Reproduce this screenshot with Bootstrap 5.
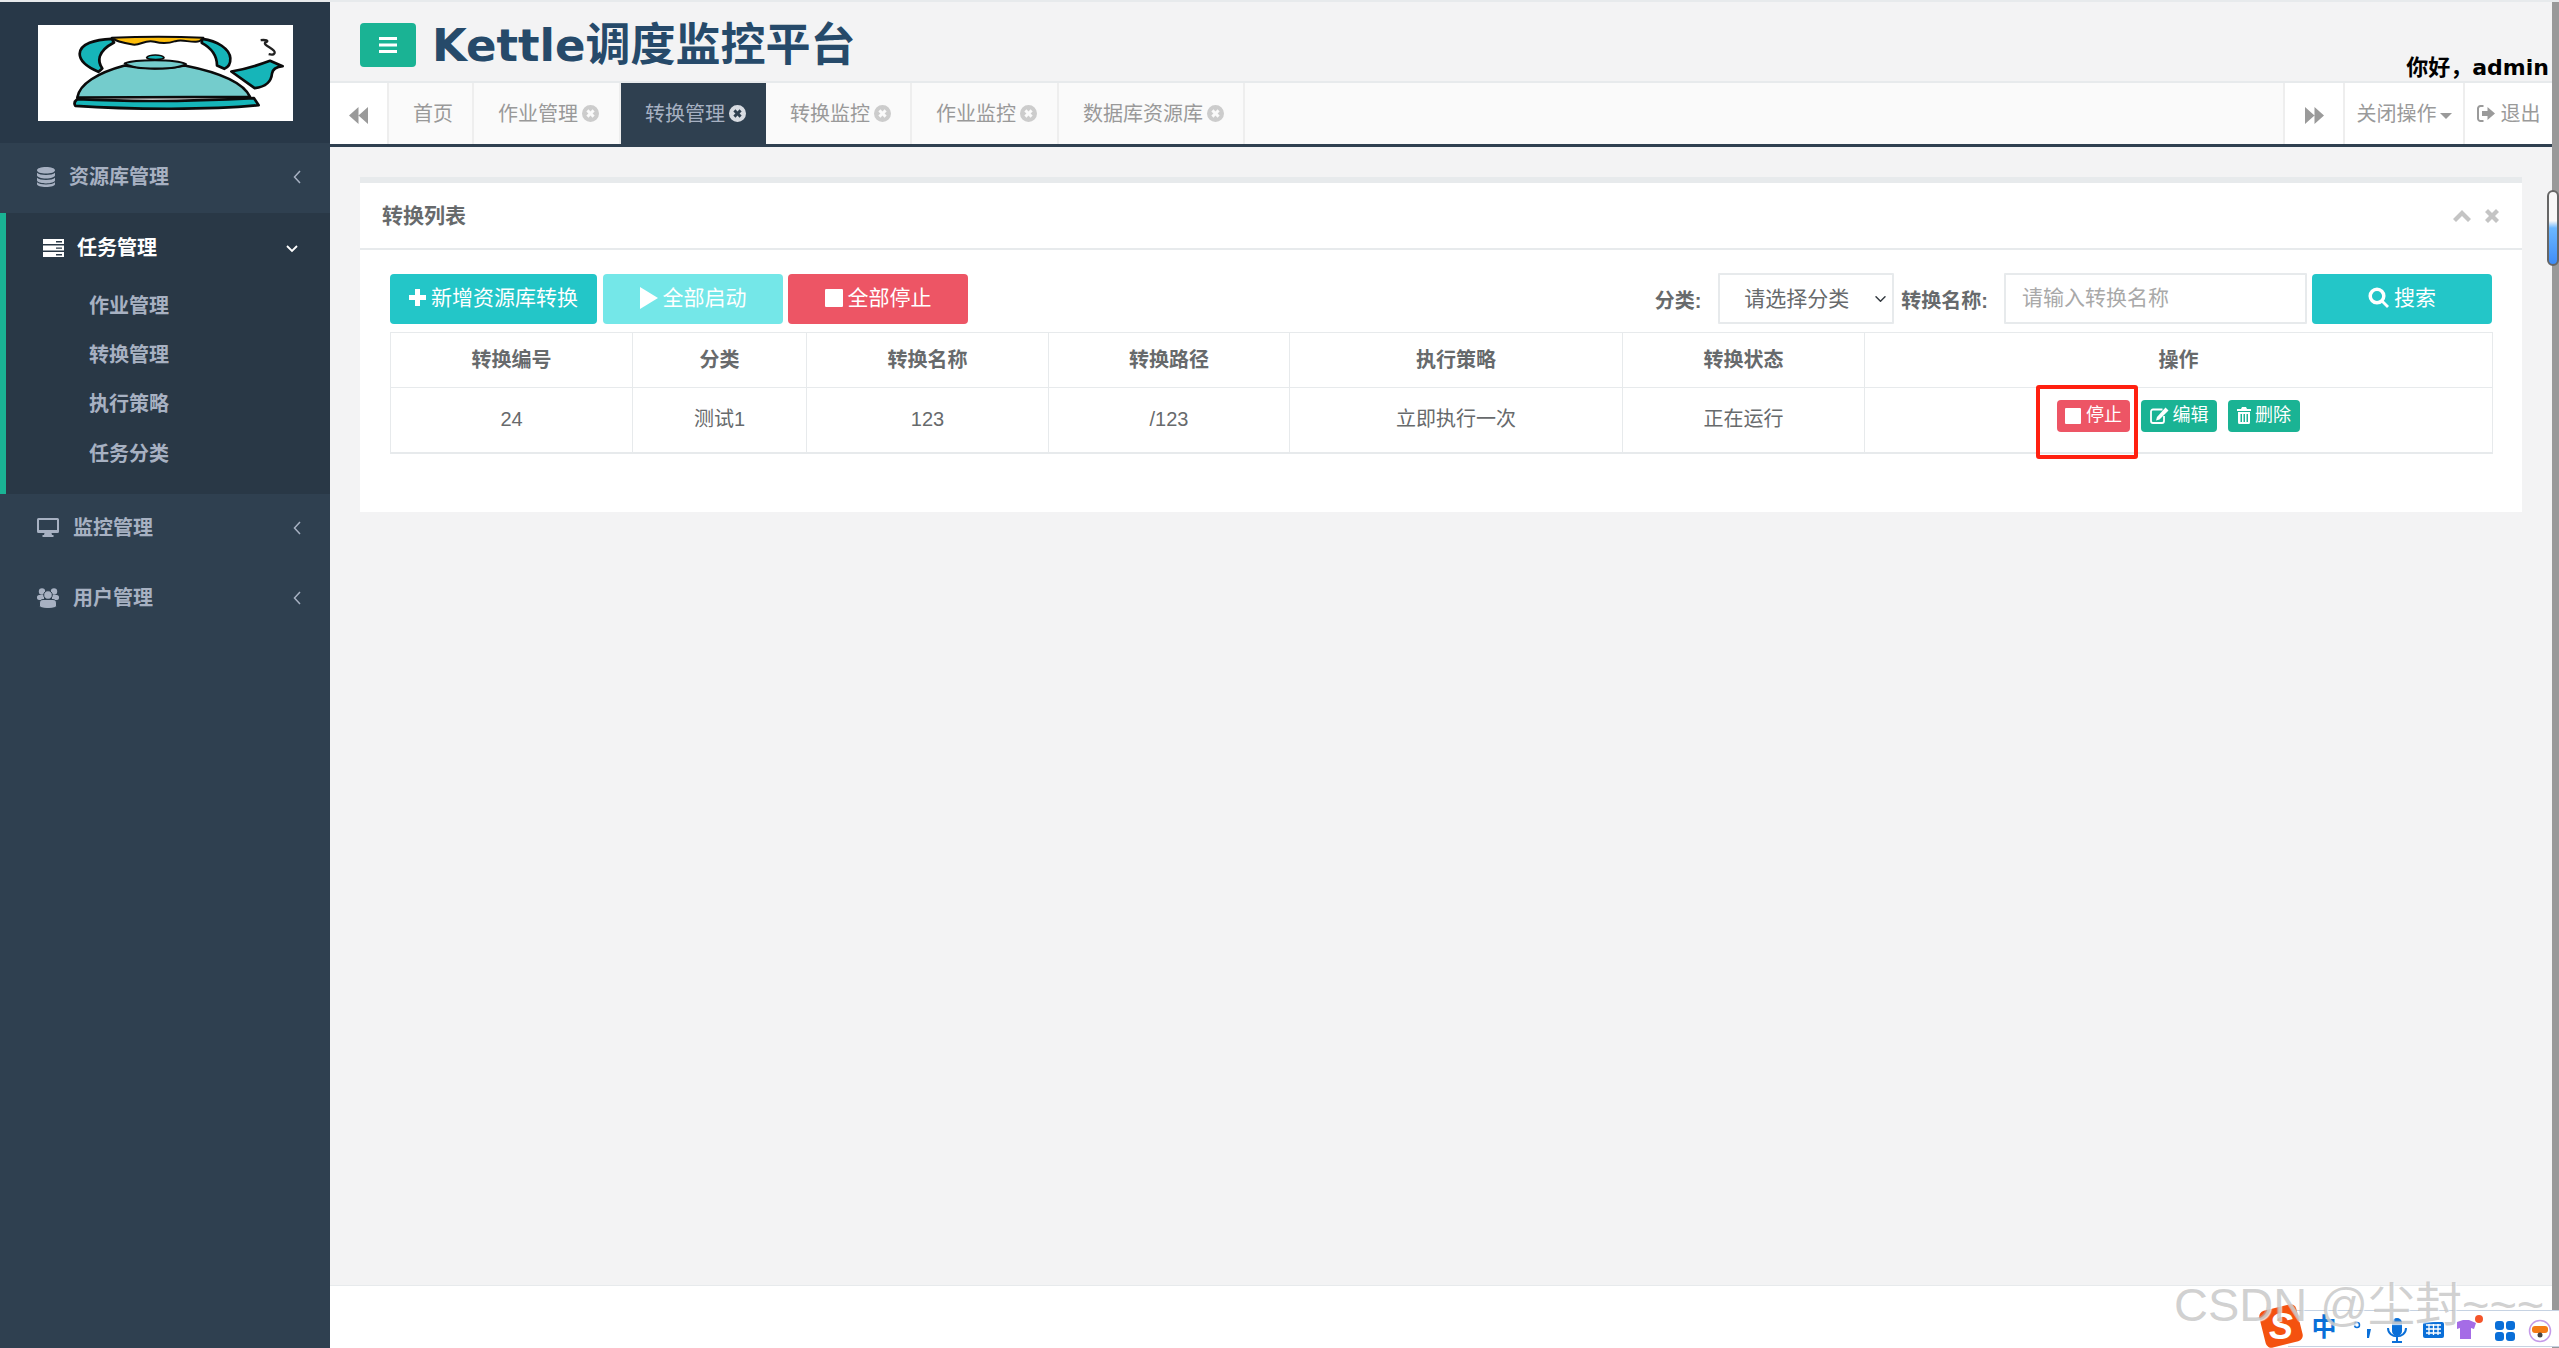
<!DOCTYPE html>
<html lang="zh-CN">
<head>
  <meta charset="UTF-8" />
  <title>Kettle调度监控平台</title>
  <link href="https://cdn.jsdelivr.net/npm/bootstrap@5.3.0/dist/css/bootstrap.min.css" rel="stylesheet" />
  <style>
    body { font-family: "Liberation Sans", "Noto Sans CJK SC", sans-serif; font-size: 20px; color: #676a6c; background: #e7eaec; padding-top: 2px; }
    svg { display: block; flex: none; fill: currentColor; }
    .page-shell { height: 1346px; position: relative; }

    /* sidebar */
    .side-panel { width: 330px; flex: none; background: #2f4050; color: #a7b1c2; font-weight: 700; }
    .side-logo { height: 141px; background: #283848; padding: 23px 0 0 38px; }
    .logo-box { width: 255px; height: 96px; background: #fff; }
    .side-item { height: 70px; padding: 0 29px 2px 37px; gap: 14px; }
    .side-item .side-label { flex-grow: 1; line-height: 1; }
    .side-open { background: #293846; border-left: 6px solid #1ab394; padding-bottom: 16px; }
    .side-open .side-item { height: 68px; color: #fff; padding: 2px 31px 0 37px; gap: 13px; }
    .side-sub { height: 49.2px; padding-left: 83px; line-height: 51px; }

    /* top */
    .main-col { min-width: 0; background: #f3f3f4; }
    .top-bar { height: 81px; border-bottom: 2px solid #e7eaec; padding-left: 30px; background: #f3f3f4; }
    .menu-toggle { width: 56px; height: 44px; margin-top: 21px; background: #1ab394; border-radius: 4px; padding: 0; border: 0; color: #fff; }
    .site-title { margin: 16px 0 0 16px; font-family: "DejaVu Sans", "Noto Sans CJK SC", sans-serif; font-weight: 700; font-size: 45px; line-height: 56px; color: #264a6a; }
    .hello-user { margin-top: 49px; padding-right: 3px; font-family: "DejaVu Sans", "Noto Sans CJK SC", sans-serif; font-weight: 700; font-size: 22px; line-height: 34px; color: #000; white-space: nowrap; }

    .tab-strip { height: 64px; background: #fafafa; border-bottom: 3px solid #2f4050; color: #999; }
    .tab-cell { height: 61px; border-right: 2px solid #eee; padding: 0 0 0 24px; gap: 4px; white-space: nowrap; }
    .tab-arrow { background: #fff; padding: 0; justify-content: center; color: #9a9a9a; }
    .tab-on { background: #2f4050; color: #a7b1c2; border-right: 0; }
    .tab-dot { color: #ccc; }
    .tab-on .tab-dot { color: #d8dce2; }
    .tab-side { background: #fff; border-left: 2px solid #eee; border-right: 0; }

    /* list card */
    .list-area { padding: 30px 30px 0 30px; }
    .list-card { background: #fff; border-top: 6px solid #e7eaec; height: 335px; }
    .list-head { height: 67px; border-bottom: 2px solid #e7eaec; padding: 0 23px 0 22px; font-size: 21px; font-weight: 700; }
    .head-tools { color: #c4c4c4; gap: 14px; }
    .list-body { padding: 23px 30px 0 30px; }

    .act-btn { height: 50px; border: 0; border-radius: 4px; color: #fff; font-size: 21px; padding: 0 0 2px; gap: 5px; }
    .act-info { background: #23c6c8; }
    .act-faded { background: #74e7e8; }
    .act-red { background: #ed5565; }
    .filter-label { font-size: 20px; font-weight: 700; white-space: nowrap; margin-top: 4px; }
    .filter-select.form-select { width: 176px; height: 51px; font-size: 21px; color: #676a6c; border: 2px solid #e7eaec; border-radius: 1px; padding: 0 30px 0 24px; background-size: 15px 12px; background-position: right 4px center; }
    .filter-input.form-control { width: 303px; height: 51px; font-size: 21px; border: 2px solid #e7eaec; border-radius: 1px; padding: 0 16px 2px; }
    .filter-input.form-control::placeholder { color: #a9a9a9; }

    .run-table { width: 2102px; margin: 8px 0 0 0; table-layout: fixed; border-collapse: collapse; }
    .run-table th, .run-table td { border: 1px solid #e7eaec; text-align: center; padding: 0; color: #676a6c; vertical-align: middle; }
    .run-table th { height: 55px; font-weight: 700; }
    .run-table td { height: 65px; border-bottom: 2px solid #e7eaec; padding-bottom: 2px; }
    .row-btn { height: 32px; border: 0; border-radius: 4px; color: #fff; font-size: 18px; padding: 0; gap: 4px; }
    .row-green { background: #1ab394; }
    .row-red { background: #ed5565; }
    .row-actions { gap: 11px; margin-top: -6px; }
    .mark-wrap { position: relative; }
    .red-mark { position: absolute; left: -21px; top: -15px; width: 102px; height: 74px; border: 4px solid #ff2010; border-radius: 3px; }

    .foot-bar { height: 63px; background: #fff; border-top: 1px solid #e7eaec; flex: none; }
    .scroll-rail { width: 7px; flex: none; background: #999; }
    .scroll-thumb { position: absolute; left: 2547px; top: 188px; width: 12px; height: 76px; border: 2px solid #666; border-radius: 6px; background: linear-gradient(#f8f8f8 0 40%, #6cb8ff 50%, #3f8cf6 100%); }
    .ime-bar { position: absolute; left: 2258px; top: 1301px; }
    .water-mark { position: absolute; left: 2174px; top: 1275px; font-size: 47px; line-height: 56px; white-space: nowrap; color: rgba(170,170,170,.55); text-shadow: 1px 1px 1px rgba(255,255,255,.8); pointer-events: none; }
  </style>
</head>
<body class="overflow-hidden">
  <svg width="0" height="0" class="position-absolute">
    <symbol id="i-x" viewBox="1 1 18 18"><path d="M10 1a9 9 0 1 0 0 18 9 9 0 0 0 0-18zm4.400 11.200-2.200 2.200L10 12.200l-2.200 2.200-2.200-2.200L7.800 10 5.600 7.800l2.200-2.200L10 7.800l2.200-2.200 2.200 2.200L12.200 10z"/></symbol>
    <symbol id="i-stop" viewBox="0 0 16 16"><rect width="16" height="16" rx="1"/></symbol>
    <symbol id="i-prev" viewBox="1 2 18 16"><path d="M10 2v16L1 10zM19 2v16l-9-8z"/></symbol>
    <symbol id="i-next" viewBox="1 2 18 16"><path d="M1 2v16l9-8zM10 2v16l9-8z"/></symbol>
    <symbol id="i-left" viewBox="0 0 8 14"><path d="M7 1 1.500 7 7 13" fill="none" stroke="currentColor" stroke-width="1.500"/></symbol>
  </svg>

  <div class="page-shell d-flex">
    <!-- 左侧菜单 -->
    <aside class="side-panel d-flex flex-column">
      <div class="side-logo">
        <div class="logo-box">
          <svg width="255" height="96" viewBox="114 75 765 287">
            <g stroke="#0b0b0b" stroke-width="8" stroke-linejoin="round">
              <path d="M335 116c-50 2-95 15-96 45 0 25 28 42 56 54 6-4 8-7 12-10-14-20-18-50 35-78z" fill="#16b5b9"/>
              <path d="M607 116c45 6 82 30 84 58 1 18-8 28-18 32l-22-10c0-24-12-50-46-68z" fill="#16b5b9"/>
              <path d="M335 113c80-4 200-4 275 0-6 6-8 12-22 12-24 1-40-8-62-2-20 7-40 8-62 2-30-8-42 12-66 8-26-4-50-8-63-20z" fill="#fdbd0a" stroke-width="6"/>
              <path d="M694 214c40-6 84-20 116-32l38 16c-16 2-30 6-32 22-2 24-20 40-52 44z" fill="#16b5b9"/>
              <path d="M232 292c6-40 60-74 142-96 60 12 120 12 180 0 100 20 176 50 196 94z" fill="#74cccc"/>
              <path d="M374 190c30-12 150-14 184 2-30 18-150 18-184-2z" fill="#74cccc" stroke-width="6"/>
              <path d="M440 172c8-10 44-10 52 0 2 8-50 8-52 0z" fill="#16b5b9" stroke-width="5"/>
              <path d="M232 297c160 8 360 6 530-3l14 21c-150 16-400 12-550 2-4-6-2-14 6-20z" fill="#16b5b9"/>
            </g>
            <path d="M782 120c16-2 26 2 16 6-16 8 30 20 26 32-2 6-10 6-18 4" fill="none" stroke="#222" stroke-width="7"/>
          </svg>
        </div>
      </div>

      <div class="side-item d-flex align-items-center">
        <svg width="18" height="20" viewBox="0 0 18 20"><path d="M9 0c5 0 9 1.300 9 3.300S14 6.600 9 6.600 0 5.300 0 3.300 4 0 9 0zM0 5.800C1.500 7.300 5 8 9 8s7.500-.7 9-2.200v2.500C18 10.200 14 11.500 9 11.500S0 10.200 0 8.300zM0 10.800c1.500 1.500 5 2.200 9 2.200s7.500-.7 9-2.200v2.500C18 15.200 14 16.400 9 16.400S0 15.200 0 13.300zM0 15.200c1.500 1.500 5 2.200 9 2.200s7.500-.7 9-2.200v1.800C18 18.900 14 20 9 20S0 18.900 0 17z"/></svg>
        <span class="side-label">资源库管理</span>
        <svg width="8" height="14"><use href="#i-left"/></svg>
      </div>

      <div class="side-open">
        <div class="side-item d-flex align-items-center">
          <svg width="21" height="18" viewBox="0 0 21 18"><path d="M0 0h21v5H0zM0 6.500h21v5H0zM0 13h21v5H0z"/><path d="M13 2h6v1.400h-6zM13 8.400h6v1.400h-6zM13 15h6v1.400h-6z" fill="#293846"/></svg>
          <span class="side-label">任务管理</span>
          <svg width="14" height="9" viewBox="0 0 14 9"><path d="M2 2l5 5 5-5" fill="none" stroke="currentColor" stroke-width="1.800"/></svg>
        </div>
        <div class="side-sub">作业管理</div>
        <div class="side-sub">转换管理</div>
        <div class="side-sub">执行策略</div>
        <div class="side-sub">任务分类</div>
      </div>

      <div class="side-item d-flex align-items-center">
        <svg width="22" height="19" viewBox="0 0 22 19"><path d="M1.500 0h19A1.500 1.500 0 0 1 22 1.500v12a1.500 1.500 0 0 1-1.500 1.500h-6l.5 2h1.500v2h-11v-2H7l.5-2h-6A1.500 1.500 0 0 1 0 13.500v-12A1.500 1.500 0 0 1 1.500 0zM2 2v10h18V2z"/></svg>
        <span class="side-label">监控管理</span>
        <svg width="8" height="14"><use href="#i-left"/></svg>
      </div>
      <div class="side-item d-flex align-items-center">
        <svg width="22" height="20" viewBox="0 0 22 20"><circle cx="5" cy="3.500" r="3.200"/><circle cx="17" cy="3.500" r="3.200"/><path d="M0 9c0-1.500 1.500-2 3-2h4v5H2c-1 0-2-.8-2-2zM22 9c0-1.500-1.500-2-3-2h-4v5h5c1 0 2-.8 2-2z"/><g stroke="#2f4050" stroke-width="1"><circle cx="11" cy="7" r="4.300"/><path d="M6 11.500h10c2 0 3.500 1.500 3.500 3.500v3c0 1.200-3 2.500-8.500 2.500S2.500 19.200 2.500 18v-3c0-2 1.500-3.500 3.500-3.500z"/></g></svg>
        <span class="side-label">用户管理</span>
        <svg width="8" height="14"><use href="#i-left"/></svg>
      </div>
    </aside>

    <!-- 主内容 -->
    <main class="main-col flex-grow-1 d-flex flex-column">
      <div class="top-bar d-flex flex-shrink-0">
        <button class="menu-toggle d-flex align-items-center justify-content-center" type="button">
          <svg width="18" height="16" viewBox="0 0 18 16"><path d="M0 0h18v3H0zM0 6.500h18v3H0zM0 13h18v3H0z"/></svg>
        </button>
        <div class="site-title flex-grow-1">Kettle调度监控平台</div>
        <div class="hello-user">你好，admin</div>
      </div>

      <div class="tab-strip d-flex flex-shrink-0">
        <div class="tab-cell tab-arrow d-flex align-items-center" style="width:59px"><svg width="19" height="17" class="mt-1"><use href="#i-prev"/></svg></div>
        <div class="tab-cell d-flex align-items-center" style="width:85px">首页</div>
        <div class="tab-cell d-flex align-items-center" style="width:147px">作业管理<svg class="tab-dot" width="17" height="17"><use href="#i-x"/></svg></div>
        <div class="tab-cell tab-on d-flex align-items-center" style="width:145px">转换管理<svg class="tab-dot" width="17" height="17"><use href="#i-x"/></svg></div>
        <div class="tab-cell d-flex align-items-center" style="width:146px">转换监控<svg class="tab-dot" width="17" height="17"><use href="#i-x"/></svg></div>
        <div class="tab-cell d-flex align-items-center" style="width:147px">作业监控<svg class="tab-dot" width="17" height="17"><use href="#i-x"/></svg></div>
        <div class="tab-cell d-flex align-items-center" style="width:186px">数据库资源库<svg class="tab-dot" width="17" height="17"><use href="#i-x"/></svg></div>
        <div class="flex-grow-1"></div>
        <div class="tab-cell tab-arrow tab-side d-flex align-items-center" style="width:60px"><svg width="19" height="17" class="mt-1"><use href="#i-next"/></svg></div>
        <div class="tab-cell tab-arrow tab-side d-flex align-items-center" style="width:120px;gap:3px">关闭操作<svg width="12" height="6" viewBox="0 0 12 6" class="mt-1"><path d="M0 0h12L6 6z"/></svg></div>
        <div class="tab-cell tab-arrow tab-side d-flex align-items-center" style="width:89px;gap:6px">
          <svg width="18" height="17" viewBox="0 0 18 17"><path d="M6.500 1H3.500A2.500 2.500 0 0 0 1 3.500v10A2.500 2.500 0 0 0 3.500 16h3" fill="none" stroke="currentColor" stroke-width="2"/><path d="M10.500 2 18 8.500 10.500 15v-4H5V6h5.500z"/></svg>退出
        </div>
      </div>

      <div class="list-area flex-grow-1">
        <section class="list-card">
          <div class="list-head d-flex align-items-center justify-content-between">
            <span>转换列表</span>
            <div class="head-tools d-flex align-items-center">
              <svg width="18" height="12" viewBox="0 0 18 12"><path d="M9 0l9 9-3 3-6-6-6 6-3-3z"/></svg>
              <svg width="14" height="14" viewBox="0 0 14 14"><path d="M3 0l4 4 4-4 3 3-4 4 4 4-3 3-4-4-4 4-3-3 4-4-4-4z"/></svg>
            </div>
          </div>
          <div class="list-body">
            <div class="d-flex align-items-center">
              <button type="button" class="act-btn act-info d-flex align-items-center justify-content-center" style="width:207px"><svg width="17" height="17" viewBox="0 0 17 17"><path d="M6 0h5v6h6v5h-6v6H6v-6H0V6h6z"/></svg>新增资源库转换</button>
              <button type="button" class="act-btn act-faded d-flex align-items-center justify-content-center" style="width:180px;margin-left:6px"><svg width="18" height="22" viewBox="0 0 18 22"><path d="M0 0l18 11L0 22z"/></svg>全部启动</button>
              <button type="button" class="act-btn act-red d-flex align-items-center justify-content-center" style="width:180px;margin-left:5px"><svg width="18" height="18"><use href="#i-stop"/></svg>全部停止</button>
              <div class="flex-grow-1"></div>
              <label class="filter-label" style="margin-right:17px">分类:</label>
              <select class="form-select filter-select"><option>请选择分类</option></select>
              <label class="filter-label" style="margin:4px 16px 0 7px">转换名称:</label>
              <input type="text" class="form-control filter-input" placeholder="请输入转换名称" />
              <button type="button" class="act-btn act-info d-flex align-items-center justify-content-center" style="width:180px;margin-left:5px"><svg width="21" height="21" viewBox="0 0 21 21"><circle cx="9" cy="9" r="6.800" fill="none" stroke="currentColor" stroke-width="3.500"/><path d="M13.500 15.500l2-2 5.500 5.500-2 2z"/></svg>搜索</button>
            </div>

            <table class="run-table">
              <colgroup>
                <col style="width:242px" /><col style="width:174px" /><col style="width:242px" /><col style="width:241px" /><col style="width:333px" /><col style="width:242px" /><col style="width:628px" />
              </colgroup>
              <thead>
                <tr><th>转换编号</th><th>分类</th><th>转换名称</th><th>转换路径</th><th>执行策略</th><th>转换状态</th><th>操作</th></tr>
              </thead>
              <tbody>
                <tr>
                  <td>24</td>
                  <td>测试1</td>
                  <td>123</td>
                  <td>/123</td>
                  <td>立即执行一次</td>
                  <td>正在运行</td>
                  <td>
                    <div class="row-actions d-flex justify-content-center">
                      <span class="mark-wrap">
                        <button type="button" class="row-btn row-red d-flex align-items-center justify-content-center" style="width:73px;gap:5px"><svg width="16" height="16"><use href="#i-stop"/></svg>停止</button>
                        <span class="red-mark"></span>
                      </span>
                      <button type="button" class="row-btn row-green d-flex align-items-center justify-content-center" style="width:76px"><svg width="19" height="17" viewBox="0 0 19 17"><path d="M12.500 2.500H3A2 2 0 0 0 1 4.500v9.500a2 2 0 0 0 2 2h9a2 2 0 0 0 2-2V9" fill="none" stroke="currentColor" stroke-width="1.800"/><path d="M15.500.5 18.500 3.500 9.500 12.500 6 13.500 7 10z"/></svg>编辑</button>
                      <button type="button" class="row-btn row-green d-flex align-items-center justify-content-center" style="width:72px"><svg width="14" height="17" viewBox="0 0 14 17"><path d="M5 0h4l1 2h4v2H0V2h4zM1 5h12v10.500a1.500 1.500 0 0 1-1.500 1.500h-9A1.500 1.500 0 0 1 1 15.500zm2.500 2v8h1.500V7zm3 0v8H8V7zm3 0v8H11V7z" fill-rule="evenodd"/></svg>删除</button>
                    </div>
                  </td>
                </tr>
              </tbody>
            </table>
          </div>
        </section>
      </div>

      <div class="foot-bar"></div>
    </main>

    <div class="scroll-rail"></div>
    <div class="scroll-thumb"></div>

    <!-- 输入法工具条 -->
    <svg class="ime-bar" width="301" height="45" viewBox="0 0 301 45">
      <rect x="30" y="7" width="271" height="37" fill="#fff"/>
      <path d="M30 7.500h271M30 43.500h271" stroke="#c6d2e2" stroke-width="1"/>
      <rect x="4" y="4" width="38" height="38" rx="6" fill="#f4520f" transform="rotate(-14 23 23)"/>
      <text x="23" y="36" font-family="Liberation Sans" font-weight="700" font-style="italic" font-size="36" fill="#fff" text-anchor="middle">S</text>
      <text x="66" y="33" font-family="Noto Sans CJK SC" font-weight="700" font-size="25" fill="#0a6fd8" text-anchor="middle">中</text>
      <circle cx="99" cy="22" r="2.500" fill="none" stroke="#0a6fd8" stroke-width="1.500"/>
      <path d="M109 26h4l-2 9h-2z" fill="#0a6fd8"/>
      <rect x="134" y="15" width="10" height="18" rx="5" fill="#0a6fd8"/>
      <path d="M130 25c0 11 18 11 18 0M139 32v6M134 39h10" fill="none" stroke="#0a6fd8" stroke-width="2"/>
      <rect x="165" y="19" width="21" height="16" rx="2" fill="#0a6fd8"/>
      <path d="M168 22h15M168 26h15M168 30h15M171 21v11M175.500 21v11M180 21v11" stroke="#fff" stroke-width="1.300"/>
      <path d="M199 19l6-2h6l7 3-2 6-3-1v11h-11v-11l-3 1z" fill="#a56ce6"/>
      <circle cx="221" cy="16" r="4" fill="#f4552a"/>
      <g fill="#0a6fd8"><rect x="237" y="18" width="9" height="9" rx="3"/><rect x="248" y="18" width="9" height="9" rx="3"/><rect x="237" y="29" width="9" height="9" rx="3"/><rect x="248" y="29" width="9" height="9" rx="3"/></g>
      <circle cx="282" cy="28" r="10.500" fill="#fff" stroke="#c49ae8" stroke-width="1.500"/>
      <rect x="274" y="23" width="16" height="7" rx="3" fill="#f47a17"/>
      <circle cx="282" cy="32" r="2.500" fill="#444"/>
    </svg>
    <div class="water-mark">CSDN @尘封~~~</div>
  </div>
  <script src="https://cdn.jsdelivr.net/npm/bootstrap@5.3.0/dist/js/bootstrap.bundle.min.js"></script>
</body>
</html>
